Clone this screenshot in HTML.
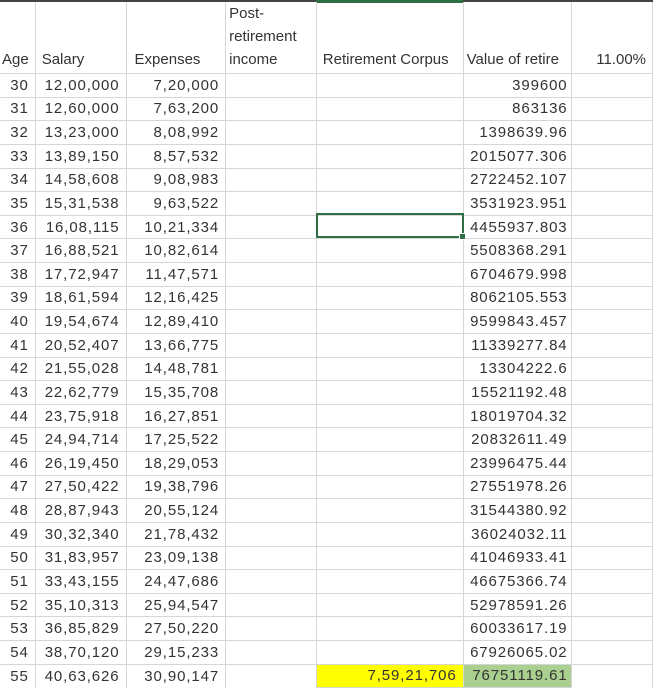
<!DOCTYPE html>
<html><head><meta charset="utf-8"><style>
html,body{margin:0;padding:0;background:#fff;width:653px;height:700px;overflow:hidden}
body{font-family:"Liberation Sans",sans-serif;font-size:15px;color:#333;position:relative}
.top{position:absolute;left:0;top:0;width:653px;height:2px;background:#444}
.topg{position:absolute;left:316px;top:0;width:147px;height:3px;background:#2f6f44}
table{position:absolute;left:0;top:2px;border-collapse:collapse;table-layout:fixed}
td{border-right:1px solid #d6d6d6;border-bottom:1px solid #d6d6d6;height:23.64px;padding:0 6px 0 3px;white-space:nowrap;overflow:hidden;text-align:right;box-sizing:border-box;letter-spacing:0.9px}
td:nth-child(6){padding-right:3px}
tr.h td{height:70px;vertical-align:bottom;text-align:left;padding-bottom:2px;line-height:23px;letter-spacing:0}
.y{background:#ffff00}.g{background:#a9d08e}
.sel{position:absolute;left:316px;top:213px;width:148px;height:25px;border:2px solid #2f6f44;box-sizing:border-box}
.sel:after{content:"";position:absolute;right:-4px;bottom:-4px;width:5px;height:5px;background:#2f6f44;border:1px solid #fff}
</style></head><body>
<div class="top"></div><div class="topg"></div>
<table>
<colgroup><col style="width:34px"><col style="width:91px"><col style="width:100px"><col style="width:91px"><col style="width:147px"><col style="width:108px"><col style="width:82px"></colgroup>
<tr class="h"><td style="padding-left:2px">Age</td><td style="padding-left:6px">Salary</td><td style="padding-left:8px">Expenses</td><td>Post-<br>retirement<br>income</td><td style="text-align:right;padding-right:14px">Retirement Corpus</td><td style="padding-left:3px">Value of retire</td><td style="text-align:right;padding-right:6px">11.00%</td></tr>
<tr><td>30</td><td>12,00,000</td><td>7,20,000</td><td></td><td></td><td>399600</td><td></td></tr>
<tr><td>31</td><td>12,60,000</td><td>7,63,200</td><td></td><td></td><td>863136</td><td></td></tr>
<tr><td>32</td><td>13,23,000</td><td>8,08,992</td><td></td><td></td><td>1398639.96</td><td></td></tr>
<tr><td>33</td><td>13,89,150</td><td>8,57,532</td><td></td><td></td><td>2015077.306</td><td></td></tr>
<tr><td>34</td><td>14,58,608</td><td>9,08,983</td><td></td><td></td><td>2722452.107</td><td></td></tr>
<tr><td>35</td><td>15,31,538</td><td>9,63,522</td><td></td><td></td><td>3531923.951</td><td></td></tr>
<tr><td>36</td><td>16,08,115</td><td>10,21,334</td><td></td><td></td><td>4455937.803</td><td></td></tr>
<tr><td>37</td><td>16,88,521</td><td>10,82,614</td><td></td><td></td><td>5508368.291</td><td></td></tr>
<tr><td>38</td><td>17,72,947</td><td>11,47,571</td><td></td><td></td><td>6704679.998</td><td></td></tr>
<tr><td>39</td><td>18,61,594</td><td>12,16,425</td><td></td><td></td><td>8062105.553</td><td></td></tr>
<tr><td>40</td><td>19,54,674</td><td>12,89,410</td><td></td><td></td><td>9599843.457</td><td></td></tr>
<tr><td>41</td><td>20,52,407</td><td>13,66,775</td><td></td><td></td><td>11339277.84</td><td></td></tr>
<tr><td>42</td><td>21,55,028</td><td>14,48,781</td><td></td><td></td><td>13304222.6</td><td></td></tr>
<tr><td>43</td><td>22,62,779</td><td>15,35,708</td><td></td><td></td><td>15521192.48</td><td></td></tr>
<tr><td>44</td><td>23,75,918</td><td>16,27,851</td><td></td><td></td><td>18019704.32</td><td></td></tr>
<tr><td>45</td><td>24,94,714</td><td>17,25,522</td><td></td><td></td><td>20832611.49</td><td></td></tr>
<tr><td>46</td><td>26,19,450</td><td>18,29,053</td><td></td><td></td><td>23996475.44</td><td></td></tr>
<tr><td>47</td><td>27,50,422</td><td>19,38,796</td><td></td><td></td><td>27551978.26</td><td></td></tr>
<tr><td>48</td><td>28,87,943</td><td>20,55,124</td><td></td><td></td><td>31544380.92</td><td></td></tr>
<tr><td>49</td><td>30,32,340</td><td>21,78,432</td><td></td><td></td><td>36024032.11</td><td></td></tr>
<tr><td>50</td><td>31,83,957</td><td>23,09,138</td><td></td><td></td><td>41046933.41</td><td></td></tr>
<tr><td>51</td><td>33,43,155</td><td>24,47,686</td><td></td><td></td><td>46675366.74</td><td></td></tr>
<tr><td>52</td><td>35,10,313</td><td>25,94,547</td><td></td><td></td><td>52978591.26</td><td></td></tr>
<tr><td>53</td><td>36,85,829</td><td>27,50,220</td><td></td><td></td><td>60033617.19</td><td></td></tr>
<tr><td>54</td><td>38,70,120</td><td>29,15,233</td><td></td><td></td><td>67926065.02</td><td></td></tr>
<tr><td style="border-bottom:none">55</td><td style="border-bottom:none">40,63,626</td><td style="border-bottom:none">30,90,147</td><td style="border-bottom:none"></td><td class="y">7,59,21,706</td><td class="g">76751119.61</td><td style="border-bottom:none"></td></tr>
</table>
<div class="sel"></div>
</body></html>
